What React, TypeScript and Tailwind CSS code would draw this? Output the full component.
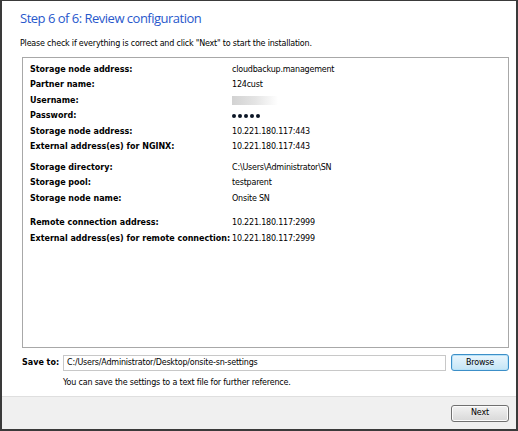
const rows: { label: string; value: React.ReactNode; gap?: string }[] = [
  { label: "Storage node address:", value: "cloudbackup.management" },
  { label: "Partner name:", value: "124cust" },
  {
    label: "Username:",
    value: <span className="block w-[46px] h-[9px] bg-gradient-to-r from-[#d2d2d2] via-[#e4e4e4] to-white" />,
  },
  {
    label: "Password:",
    value: (
      <span className="flex gap-[2px]">
        {[0, 1, 2, 3, 4].map((d) => (
          <span key={d} className="w-[4px] h-[4px] rounded-full bg-[#0b1626]" />
        ))}
      </span>
    ),
  },
  { label: "Storage node address:", value: "10.221.180.117:443" },
  { label: "External address(es) for NGINX:", value: "10.221.180.117:443" },
  { label: "Storage directory:", value: "C:\\Users\\Administrator\\SN", gap: "mt-[5px]" },
  { label: "Storage pool:", value: "testparent" },
  { label: "Storage node name:", value: "Onsite SN" },
  { label: "Remote connection address:", value: "10.221.180.117:2999", gap: "mt-[9px]" },
  { label: "External address(es) for remote connection:", value: "10.221.180.117:2999" },
];

export default function App() {
  return (
    <div className="w-[518px] h-[431px] bg-white border-t border-x-2 border-b-2 border-[#3a3a3a] flex flex-col font-['DejaVu_Sans',sans-serif] text-[8px] tracking-[-0.2px] text-black">
      <div className="px-[18px] pt-[7px]">
        <h1 className="text-[13px] leading-[20px] tracking-[-0.5px] text-[#2858cc] font-['Open_Sans',sans-serif]">
          Step 6 of 6: Review configuration
        </h1>
        <p className="mt-[10px] leading-[12px]">
          Please check if everything is correct and click "Next" to start the installation.
        </p>
      </div>

      <div className="ml-[20px] mr-[7px] mt-[7px] h-[291px] border border-[#a8a8a8] pt-[4px] pl-[7px]">
        {rows.map((r, i) => (
          <div key={i} className={`grid grid-cols-[202px_1fr] h-[15.5px] items-center ${r.gap ?? ""}`}>
            <span className="font-bold tracking-normal">{r.label}</span>
            <span>{r.value}</span>
          </div>
        ))}
      </div>

      <div className="ml-[20px] mr-[7px] mt-[6px] flex items-center">
        <span className="font-bold tracking-normal w-[41px]">Save to:</span>
        <div className="w-[383px] h-[16px] border border-[#c8c8c8] flex items-center pl-[3px]">
          C:/Users/Administrator/Desktop/onsite-sn-settings
        </div>
        <button className="ml-auto w-[58px] h-[17px] rounded-[3px] border border-[#3c8fc8] bg-gradient-to-b from-[#eaf6fd] to-[#c4e5f6] shadow-[inset_0_0_0_1px_#b8e2f8]">
          Browse
        </button>
      </div>
      <p className="ml-[61px] mt-[6px] leading-[12px]">
        You can save the settings to a text file for further reference.
      </p>

      <div className="mt-auto h-[33px] bg-[#f0f0f0] border-t border-[#dfdfdf] flex items-center justify-end pr-[7px]">
        <button className="w-[58px] h-[17px] rounded-[3px] border border-[#707070] bg-gradient-to-b from-[#f2f2f2] to-[#d8d8d8] shadow-[inset_0_0_0_1px_#fcfcfc]">
          Next
        </button>
      </div>
    </div>
  );
}
